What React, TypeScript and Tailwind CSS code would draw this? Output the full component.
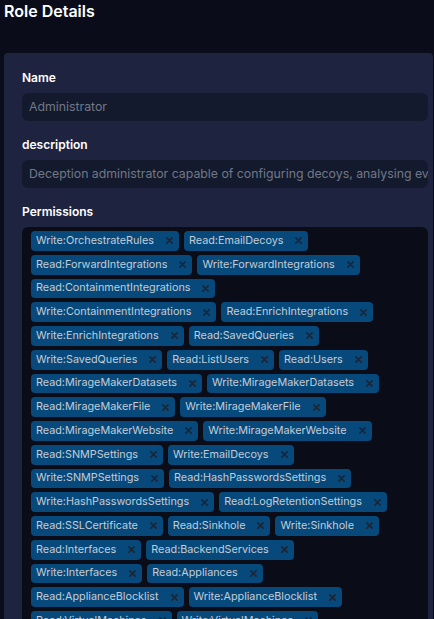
// Role details page: name, description and the permission tags of a role

const permissions = [
  'Write:OrchestrateRules',
  'Read:EmailDecoys',
  'Read:ForwardIntegrations',
  'Write:ForwardIntegrations',
  'Read:ContainmentIntegrations',
  'Write:ContainmentIntegrations',
  'Read:EnrichIntegrations',
  'Write:EnrichIntegrations',
  'Read:SavedQueries',
  'Write:SavedQueries',
  'Read:ListUsers',
  'Read:Users',
  'Read:MirageMakerDatasets',
  'Write:MirageMakerDatasets',
  'Read:MirageMakerFile',
  'Write:MirageMakerFile',
  'Read:MirageMakerWebsite',
  'Write:MirageMakerWebsite',
  'Read:SNMPSettings',
  'Write:EmailDecoys',
  'Write:SNMPSettings',
  'Read:HashPasswordsSettings',
  'Write:HashPasswordsSettings',
  'Read:LogRetentionSettings',
  'Read:SSLCertificate',
  'Read:Sinkhole',
  'Write:Sinkhole',
  'Read:Interfaces',
  'Read:BackendServices',
  'Write:Interfaces',
  'Read:Appliances',
  'Read:ApplianceBlocklist',
  'Write:ApplianceBlocklist',
  'Read:VirtualMachines',
  'Write:VirtualMachines',
];

function PermissionTag({ label }: { label: string }) {
  return (
    <span className="flex items-center h-[19.75px] pl-[5px] pr-[6px] rounded bg-[#07497a] text-[10.8px] leading-5 text-[#c3ccd8]">
      <span>{label}</span>
      <svg className="ml-3 w-[7px] h-[7px]" viewBox="0 0 8 8" fill="none">
        <path d="M1 1L7 7M7 1L1 7" stroke="#1a2536" strokeWidth="1.8" strokeLinecap="round" />
      </svg>
    </span>
  );
}

export default function App() {
  return (
    <div className="min-h-screen bg-[#0a0d19] font-['Inter',sans-serif] text-white">
      <h1 className="pl-1 text-[16px] font-semibold leading-[22px]">Role Details</h1>

      <div className="mt-[31px] ml-1 mr-[1px] rounded bg-[#1e243f] pl-[18px] pr-[5px] pt-[15px]">
        {/* Name */}
        <label className="block text-[12px] font-semibold leading-5">Name</label>
        <div className="mt-[5px] h-7 rounded-md bg-[#141a2d] px-[7px] text-[12.3px] leading-7 text-[#717887]">
          Administrator
        </div>

        {/* Description */}
        <label className="mt-[14px] block text-[12px] font-semibold leading-5">description</label>
        <div className="mt-[5px] h-7 overflow-hidden whitespace-nowrap rounded-md bg-[#141a2d] px-[7px] text-[12.3px] leading-7 text-[#717887]">
          Deception administrator capable of configuring decoys, analysing events and managing integrations
        </div>

        {/* Permissions: multi-select values, indicator space on the right */}
        <label className="mt-[14px] block text-[12px] font-semibold leading-5">Permissions</label>
        <div className="mt-[5px] rounded-md bg-[#0a0d18] pl-[9px] pr-[36px] pt-1 pb-2">
          <div className="flex flex-wrap gap-x-[5px] gap-y-1">
            {permissions.map((p) => (
              <PermissionTag key={p} label={p} />
            ))}
          </div>
        </div>
      </div>
    </div>
  );
}
